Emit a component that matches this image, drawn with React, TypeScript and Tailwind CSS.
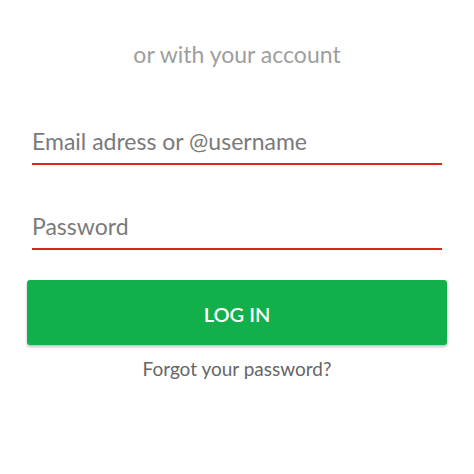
export default function App() {
  return (
    <div
      className="w-[474px] h-[474px] bg-white flex flex-col"
      style={{ fontFamily: 'Lato, "Liberation Sans", sans-serif' }}
    >
      <p className="mt-[40px] text-center text-[23px] leading-[28px] text-[#9e9e9e]">
        or with your account
      </p>

      <div className="mt-[57px] mx-[32px] border-b-[2px] border-[#d7261f] pb-[6px]">
        <input
          type="text"
          placeholder="Email adress or @username"
          className="w-full text-[23px] leading-[32px] text-[#333] placeholder:text-[#7a7a7a] outline-none bg-transparent"
        />
      </div>

      <div className="mt-[45px] mx-[32px] border-b-[2px] border-[#d7261f] pb-[6px]">
        <input
          type="password"
          placeholder="Password"
          className="w-full text-[23px] leading-[32px] text-[#333] placeholder:text-[#7a7a7a] outline-none bg-transparent"
        />
      </div>

      <button
        type="button"
        className="mt-[30px] mx-[27px] h-[65px] rounded-[3px] bg-[#12b04a] text-white text-[20px] font-semibold pt-[2px] shadow-[0_2px_3px_rgba(0,0,0,0.25)]"
      >
        LOG IN
      </button>

      <p className="mt-[12px] text-center text-[19px] leading-[24px] text-[#666]">
        Forgot your password?
      </p>
    </div>
  );
}
